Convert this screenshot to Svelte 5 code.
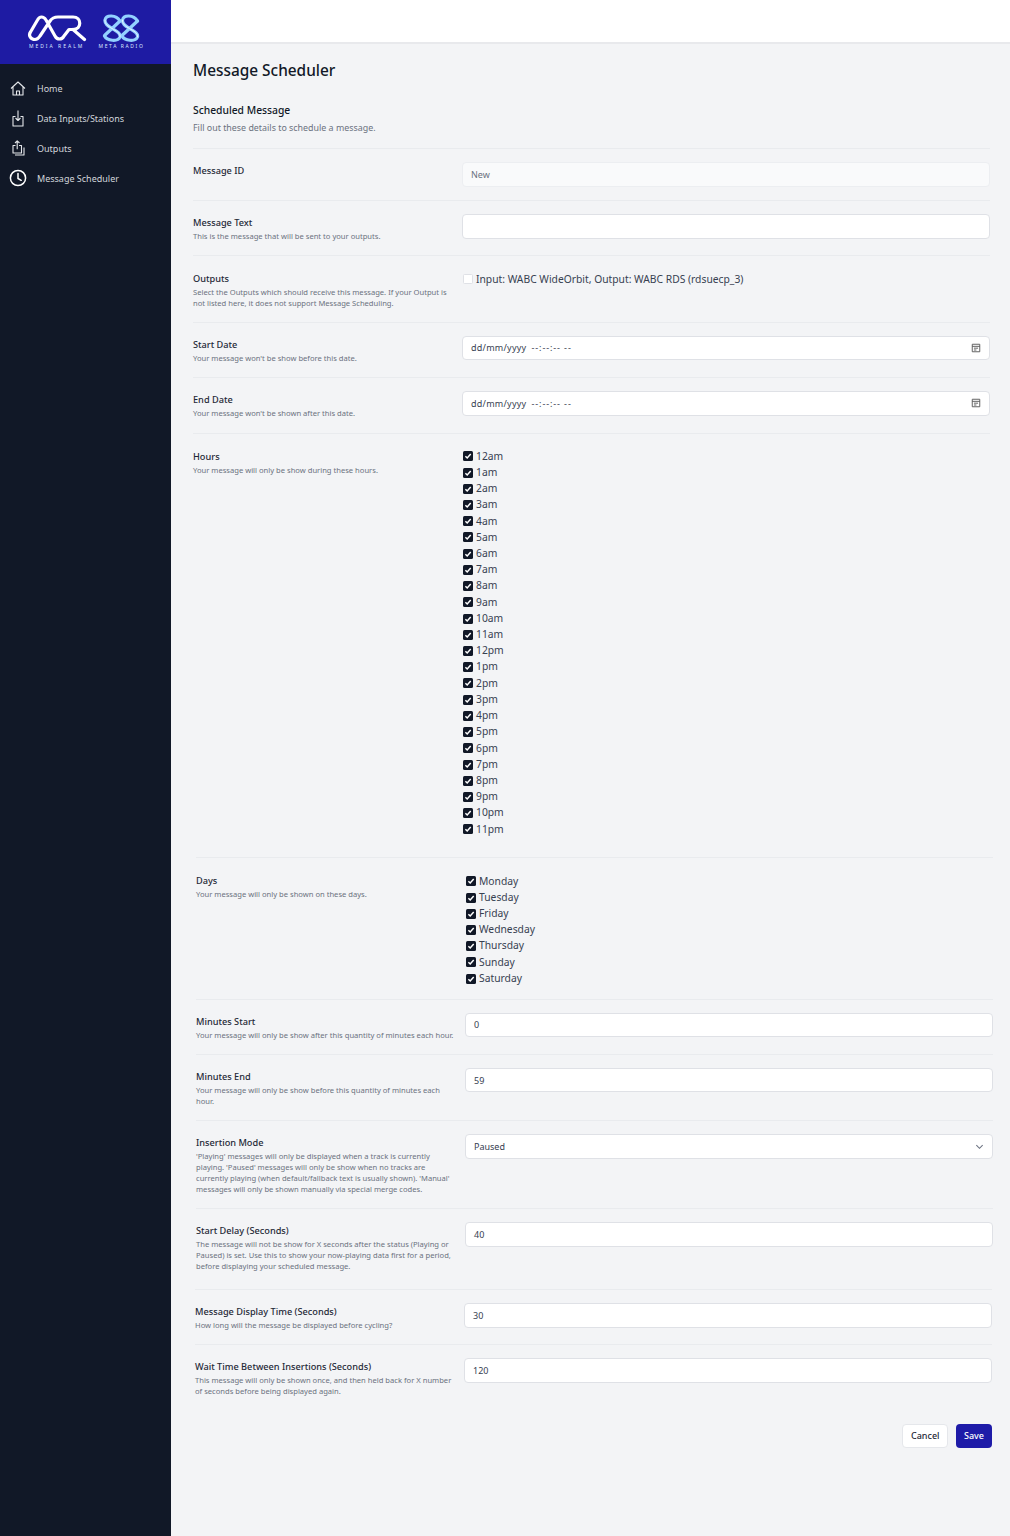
<script>
  const NAV = [
    { label: "Home", icon: "home" },
    { label: "Data Inputs/Stations", icon: "in" },
    { label: "Outputs", icon: "out" },
    { label: "Message Scheduler", icon: "clock" },
  ];
  const HOURS = ["12am","1am","2am","3am","4am","5am","6am","7am","8am","9am","10am","11am","12pm","1pm","2pm","3pm","4pm","5pm","6pm","7pm","8pm","9pm","10pm","11pm"];
  const DAYS = ["Monday","Tuesday","Friday","Wednesday","Thursday","Sunday","Saturday"];
</script>

{#snippet check(label, checked = true)}
  <label class="check">
    <span class="box" class:on={checked}>
      {#if checked}
        <svg viewBox="0 0 10 10" width="10" height="10"><path d="M2.4 5.2 4.2 7l3.5-3.9" fill="none" stroke="#fff" stroke-width="1.5"/></svg>
      {/if}
    </span>
    {label}
  </label>
{/snippet}

{#snippet row(title, help)}
  <div class="label-col">
    <div class="label">{title}</div>
    {#if help}<p class="help">{help}</p>{/if}
  </div>
{/snippet}

{#snippet dateInput()}
  <div class="input date">
    <span><span class="day">dd/mm/yyyy</span><span class="time">--:--:-- --</span></span>
    <svg viewBox="0 0 12 12" width="10" height="10"><path d="M1.5 1.5h9v9h-9zM1.5 4h9M3.5 6.2h5M3.5 8.4h3" fill="none" stroke="#555" stroke-width="1.1"/></svg>
  </div>
{/snippet}

<div class="shell">
  <aside class="sidebar">
    <div class="brand">
      <div class="logo">
        <svg viewBox="29 14 60 28" width="60" height="28">
          <path d="M37 39.5C33 39.5 30 35.5 32.5 32L39.5 20C41.5 16 45.5 16 48 20L57 36C59 40 64 40 66 36L71 29.5H75C84 29.5 84 17 75 17H60C56 17 54 18 52 21L42 36C40.5 38.5 38.5 39.5 37 39.5ZM75 29.5 86.5 39.5" fill="none" stroke="#fff" stroke-width="3.2" stroke-linejoin="round" stroke-linecap="round"/>
        </svg>
        <span class="wide">MEDIA REALM</span>
      </div>
      <div class="logo">
        <svg viewBox="102 14 38 28" width="38" height="28">
          <g fill="none" stroke-linecap="round" stroke-linejoin="round">
            <g stroke="#93d1ff" stroke-width="3.2">
              <path d="M120 21C116 14.5 106 14.5 105 20C104.5 24 108 26 112 28.5C116 31 121 33 120 37C118 42 107 41 104.5 36"/>
              <path d="M137.5 21C133.5 14.5 123.5 14.5 122.5 20C122 24 125.5 26 129.5 28.5C133.500 31 138.500 33 137.500 37C135.500 42 124.500 41 122 36"/>
              <path d="M120 21 112 28.500 105 35M137.500 21 129.500 28.500 122.500 35"/>
            </g>
            <path d="M105 20C104.500 24 108 26 112 28.500C116 31 121 33 120 37M122.500 20C122 24 125.500 26 129.500 28.500C133.500 31 138.500 33 137.500 37" stroke="#eaf6ff" stroke-width="1"/>
          </g>
        </svg>
        <span>META RADIO</span>
      </div>
    </div>
    <nav class="nav">
      {#each NAV as item (item.label)}
        <div class="nav-item">
          <span class="nav-icon">
            {#if item.icon === "home"}
              <svg viewBox="0 0 16 15" width="16" height="15"><path d="M1 7.5 8 1l7 6.5M3 6v8h10V6M6.5 14v-4h3v4" fill="none" stroke="#e5e7eb" stroke-width="1.1" stroke-linejoin="round"/></svg>
            {:else if item.icon === "in"}
              <svg viewBox="0 0 12 17" width="12" height="17"><path d="M3.5 6.5H1V16h10V6.5H8.5M6 .5v10M3.5 8 6 10.500 8.500 8" fill="none" stroke="#e5e7eb" stroke-width="1.1" stroke-linejoin="round"/></svg>
            {:else if item.icon === "out"}
              <svg viewBox="0 0 13 16" width="13" height="16"><path d="M3.5 5.5H1V13h8.500V5.500H7M5.200 .8v8.500M3 3 5.200 .8 7.500 3M3 15h9V7.500" fill="none" stroke="#e5e7eb" stroke-width="1.1" stroke-linejoin="round"/></svg>
            {:else}
              <svg viewBox="0 0 18 18" width="18" height="18"><circle cx="9" cy="9" r="7.6" fill="none" stroke="#fff" stroke-width="1.5"/><path d="M9 4.5V9.5l3.2 1.8" fill="none" stroke="#fff" stroke-width="1.5" stroke-linecap="round"/></svg>
            {/if}
          </span>
          {item.label}
        </div>
      {/each}
    </nav>
  </aside>

  <div class="content">
    <header class="topbar"></header>
    <main class="main">
      <h1>Message Scheduler</h1>
      <h2>Scheduled Message</h2>
      <p class="lead">Fill out these details to schedule a message.</p>

      <section class="form-row first">
        {@render row("Message ID", "")}
        <div class="control"><div class="input disabled">New</div></div>
      </section>

      <section class="form-row">
        {@render row("Message Text", "This is the message that will be sent to your outputs.")}
        <div class="control"><div class="input"></div></div>
      </section>

      <section class="form-row outputs-row">
        {@render row("Outputs", "Select the Outputs which should receive this message. If your Output is not listed here, it does not support Message Scheduling.")}
        <div class="control">{@render check("Input: WABC WideOrbit, Output: WABC RDS (rdsuecp_3)", false)}</div>
      </section>

      <section class="form-row">
        {@render row("Start Date", "Your message won't be show before this date.")}
        <div class="control">{@render dateInput()}</div>
      </section>

      <section class="form-row">
        {@render row("End Date", "Your message won't be shown after this date.")}
        <div class="control">{@render dateInput()}</div>
      </section>

      <section class="form-row checks-row hours-row">
        {@render row("Hours", "Your message will only be show during these hours.")}
        <div class="control">
          {#each HOURS as hour (hour)}{@render check(hour)}{/each}
        </div>
      </section>

      <section class="form-row checks-row shift3">
        {@render row("Days", "Your message will only be shown on these days.")}
        <div class="control">
          {#each DAYS as day (day)}{@render check(day)}{/each}
        </div>
      </section>

      <section class="form-row shift3">
        {@render row("Minutes Start", "Your message will only be show after this quantity of minutes each hour.")}
        <div class="control"><div class="input">0</div></div>
      </section>

      <section class="form-row shift3">
        {@render row("Minutes End", "Your message will only be show before this quantity of minutes each hour.")}
        <div class="control"><div class="input">59</div></div>
      </section>

      <section class="form-row shift3">
        {@render row("Insertion Mode", "'Playing' messages will only be displayed when a track is currently playing. 'Paused' messages will only be show when no tracks are currently playing (when default/fallback text is usually shown). 'Manual' messages will only be shown manually via special merge codes.")}
        <div class="control">
          <div class="input select">
            Paused
            <svg viewBox="0 0 10 10" width="9" height="9"><path d="M1.5 3.5 5 7l3.5-3.5" fill="none" stroke="#6b7280" stroke-width="1.2"/></svg>
          </div>
        </div>
      </section>

      <section class="form-row shift3 delay-row">
        {@render row("Start Delay (Seconds)", "The message will not be show for X seconds after the status (Playing or Paused) is set. Use this to show your now-playing data first for a period, before displaying your scheduled message.")}
        <div class="control"><div class="input">40</div></div>
      </section>

      <section class="form-row shift2">
        {@render row("Message Display Time (Seconds)", "How long will the message be displayed before cycling?")}
        <div class="control"><div class="input">30</div></div>
      </section>

      <section class="form-row shift2">
        {@render row("Wait Time Between Insertions (Seconds)", "This message will only be shown once, and then held back for X number of seconds before being displayed again.")}
        <div class="control"><div class="input">120</div></div>
      </section>

      <div class="actions">
        <button class="btn cancel">Cancel</button>
        <button class="btn save">Save</button>
      </div>
    </main>
  </div>
</div>

<style>
  :global(body) {
    margin: 0;
    background: #f3f4f6;
  }

  .shell {
    display: flex;
    min-height: 1536px;
    font-family: "Noto Sans", "Open Sans", sans-serif;
    color: #111827;
  }

  .sidebar {
    flex: 0 0 171px;
    background: #111827;
  }

  .brand {
    height: 64px;
    background: #1e1ba3;
    display: flex;
    justify-content: center;
    gap: 12px;
    padding-top: 14px;
    box-sizing: border-box;
  }

  .logo {
    display: flex;
    flex-direction: column;
    align-items: center;
    gap: 1px;
  }

  .logo span {
    font-size: 5px;
    letter-spacing: 1.6px;
    line-height: 7px;
    color: #dbeafe;
    white-space: nowrap;
  }

  .logo .wide {
    letter-spacing: 2px;
  }

  .nav {
    padding-top: 10px;
  }

  .nav-item {
    height: 29.8px;
    display: flex;
    align-items: center;
    padding-left: 9px;
    font-size: 9px;
    color: #d1d5db;
  }

  .nav-icon {
    flex: 0 0 18px;
    margin-right: 10px;
    display: flex;
    justify-content: center;
  }

  .content {
    flex: 1;
    min-width: 0;
  }

  .topbar {
    height: 42px;
    background: #fff;
    border-bottom: 2px solid #e8e9ec;
  }

  .main {
    padding: 16px 20px 0 22px;
  }

  h1 {
    margin: 0;
    font-size: 15.4px;
    line-height: 22px;
    font-weight: 500;
  }

  h2 {
    margin: 20px 0 0;
    font-size: 10.3px;
    line-height: 16px;
    font-weight: 500;
  }

  .lead {
    margin: 3px 0 0;
    font-size: 8.9px;
    line-height: 14px;
    color: #6b7280;
  }

  .form-row {
    display: grid;
    grid-template-columns: 269px 1fr;
    padding: 13px 0 13.5px;
    border-top: 1px solid #e9ebee;
  }

  .first {
    margin-top: 13px;
  }

  .outputs-row {
    padding-top: 14px;
    padding-bottom: 12.5px;
  }

  .shift3 {
    margin-left: 3px;
    margin-right: -3px;
  }

  .shift2 {
    margin-left: 2px;
    margin-right: -2px;
  }

  .delay-row {
    padding-bottom: 17px;
  }

  .label-col {
    padding: 2px 7px 0 0;
    min-width: 0;
  }

  .label {
    font-size: 9.2px;
    line-height: 14px;
    font-weight: 500;
    color: #1f2937;
  }

  .help {
    margin: 1px 0 0;
    font-size: 7.6px;
    line-height: 10.9px;
    color: #6b7280;
  }

  .input {
    height: 24.5px;
    box-sizing: border-box;
    background: #fff;
    border: 1px solid #dfe1e6;
    border-radius: 4px;
    padding: 0 8px;
    display: flex;
    align-items: center;
    font-size: 9px;
    color: #374151;
  }

  .disabled {
    background: #f9fafb;
    border-color: #eceef1;
    color: #6b7280;
  }

  .date,
  .select {
    justify-content: space-between;
  }

  .day {
    letter-spacing: 0.25px;
  }

  .time {
    margin-left: 5px;
    letter-spacing: 0.9px;
  }

  .check {
    display: flex;
    align-items: center;
    gap: 3.5px;
    height: 16.22px;
    font-size: 10.3px;
    color: #374151;
  }

  .box {
    width: 10px;
    height: 10px;
    margin: 1.5px 0 0 0.5px;
    box-sizing: border-box;
    border-radius: 1.5px;
    border: 1px solid #dfe1e6;
    background: #fff;
    display: flex;
    flex: none;
  }

  .box.on {
    background: #111827;
    border: 0;
  }

  .checks-row {
    padding-top: 14px;
    padding-bottom: 12.5px;
  }

  .hours-row {
    padding-bottom: 20.7px;
  }

  .actions {
    display: flex;
    justify-content: flex-end;
    gap: 8px;
    margin: 0 -2px 0 0;
    padding-top: 13px;
  }

  .btn {
    height: 24px;
    border-radius: 4px;
    font: 500 9px "Noto Sans", sans-serif;
    padding: 0 7.5px;
  }

  .cancel {
    background: #fff;
    border: 1px solid #e5e7eb;
    color: #1f2937;
  }

  .save {
    background: #1e1ba8;
    border: 0;
    color: #fff;
    padding: 0 8px;
  }
</style>
